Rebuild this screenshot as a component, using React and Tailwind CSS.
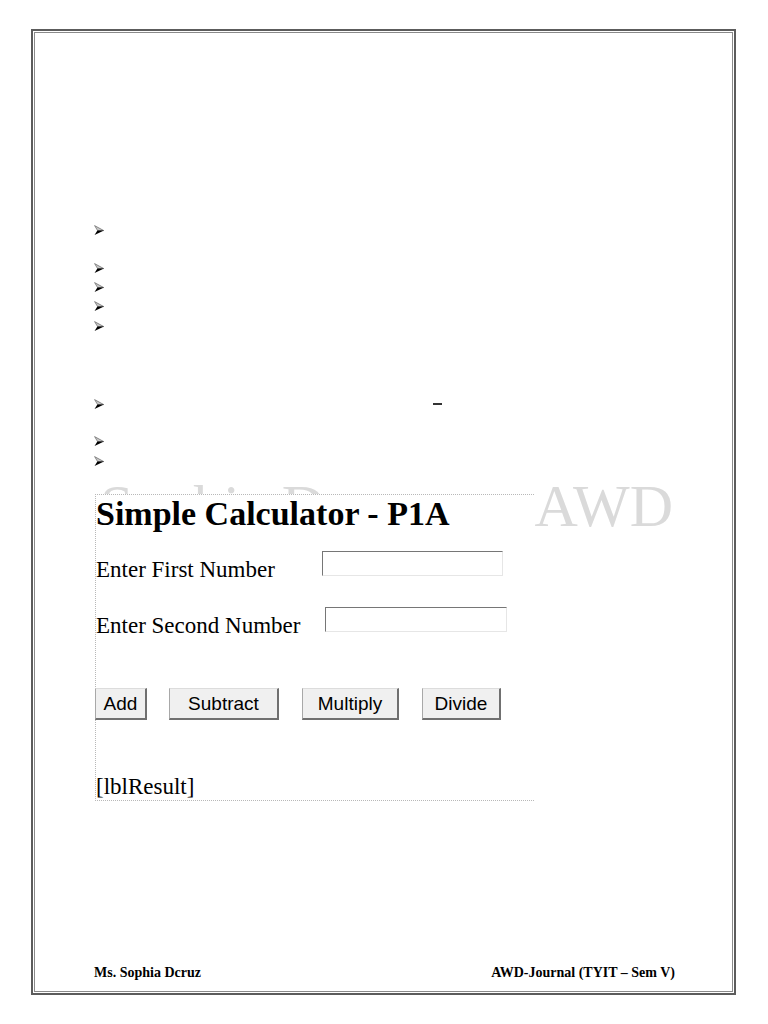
const serif = "font-['Liberation_Serif','Times_New_Roman',serif]"

function Arrow() {
  return (
    <svg width="10" height="10" viewBox="0 0 10 10" className="block">
      <polygon points="0.6,0.6 9.8,5.6 3.6,5.6" fill="#c8c8c8" stroke="#666" strokeWidth="0.7" />
      <polygon points="3.4,5.4 9.9,5.4 0.6,9.9" fill="#000" />
    </svg>
  )
}

const bulletGaps = [192, 28, 9, 9, 10, 68, 27, 10]

function Bullets() {
  return (
    <div className="flex flex-col">
      {bulletGaps.map((g, i) => (
        <div key={i} className="flex h-[10px] items-center" style={{ marginTop: g }}>
          <Arrow />
          {i === 5 && <div className="ml-[329px] h-[1.5px] w-[9px] bg-[#333]" />}
        </div>
      ))}
    </div>
  )
}

function Btn({ label, w }) {
  return (
    <button
      className={`${w} h-[32px] border border-t-[#dcdcdc] border-l-[#a8a8a8] border-r-2 border-b-2 border-r-[#707070] border-b-[#707070] bg-[#f0f0f0] text-center font-['Liberation_Sans',Arial,sans-serif] text-[19px] leading-none text-black`}
    >
      {label}
    </button>
  )
}

function Field({ label, lw, iw }) {
  return (
    <div className="flex h-[25px] items-start">
      <span className={`${lw} mt-[7px] shrink-0 whitespace-nowrap text-[23px] leading-none`}>{label}</span>
      <input
        type="text"
        className={`${iw} h-[25px] border border-t-[#767676] border-l-[#767676] border-r-[#e6e6e6] border-b-[#e6e6e6] bg-white outline-none`}
      />
    </div>
  )
}

export default function App() {
  return (
    <div className={`h-[1024px] w-[768px] overflow-hidden bg-white pl-[31px] pt-[29px] text-black ${serif}`}>
      <div className="h-[966px] w-[705px] border-2 border-[#5c5c5c] p-px">
        <div className="relative flex h-full flex-col border border-[#8a8a8a] pl-[59px] pr-[57px]">
          <div className="pointer-events-none absolute left-[65px] top-[443px] flex w-[573px] justify-between text-[60px] leading-none text-[#dadada]">
            <span>Sophia Dcruz</span>
            <span>AWD</span>
          </div>

          <Bullets />

          <div className="relative z-10 ml-px mt-[28px] w-[439px] border-l border-t border-b border-dotted border-[#b8b8b8] bg-white pb-[2px]">
            <h1 className="mt-[2px] text-[34px] font-bold leading-none">Simple Calculator - P1A</h1>
            <div className="mt-[20px]">
              <Field label="Enter First Number" lw="w-[226px]" iw="w-[181px]" />
            </div>
            <div className="mt-[31px]">
              <Field label="Enter Second Number" lw="w-[229px]" iw="w-[182px]" />
            </div>
            <div className="-ml-px mt-[56px] flex gap-[22px]">
              <Btn label="Add" w="w-[52px]" />
              <div className="flex gap-[23px]">
                <Btn label="Subtract" w="w-[110px]" />
                <Btn label="Multiply" w="w-[97px]" />
                <Btn label="Divide" w="w-[79px]" />
              </div>
            </div>
            <div className="mt-[55px] text-[23px] leading-none">[lblResult]</div>
          </div>

          <div className="mb-[11px] mt-auto flex justify-between text-[14px] font-bold leading-none">
            <span>Ms. Sophia Dcruz</span>
            <span>AWD-Journal (TYIT – Sem V)</span>
          </div>
        </div>
      </div>
    </div>
  )
}
